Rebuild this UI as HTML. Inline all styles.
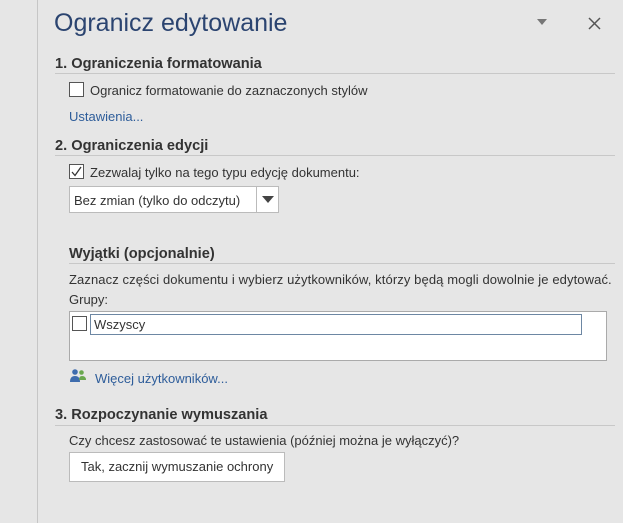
<!DOCTYPE html>
<html><head><meta charset="utf-8"><style>
*{margin:0;padding:0;box-sizing:border-box}
body{width:623px;height:523px;background:#e6e6e6;font-family:"Liberation Sans",sans-serif;position:relative;overflow:hidden;color:#262626}
.a{position:absolute;white-space:nowrap}
.h{font-weight:bold;font-size:14.6px;color:#333}
.t{font-size:13px;color:#333}
.ln{position:absolute;height:1px;background:#c8c8c8}
.cb{position:absolute;width:15px;height:15px;border:1px solid #555;background:#fff}
.lk{color:#2e5d9a;font-size:13px}
</style></head><body>
<div style="position:absolute;left:37px;top:0;width:1px;height:523px;background:#c6c6c6"></div>
<div class="a" style="left:54px;top:9px;font-size:25px;color:#2b4470">Ogranicz edytowanie</div>
<div class="a" style="left:537px;top:19px;width:0;height:0;border-left:5px solid transparent;border-right:5px solid transparent;border-top:6px solid #777"></div>
<svg class="a" style="left:588px;top:17px" width="13" height="13"><path d="M1 1L12 12M12 1L1 12" stroke="#555" stroke-width="1.5"/></svg>

<div class="a h" style="left:55px;top:56px">1. Ograniczenia formatowania</div>
<div class="ln" style="left:55px;top:73px;width:560px"></div>
<div class="cb" style="left:69px;top:82px"></div>
<div class="a t" style="left:90px;top:83px">Ogranicz formatowanie do zaznaczonych stylów</div>
<div class="a lk" style="left:69px;top:109px">Ustawienia...</div>

<div class="a h" style="left:55px;top:138px">2. Ograniczenia edycji</div>
<div class="ln" style="left:55px;top:155px;width:560px"></div>
<div class="cb" style="left:69px;top:164px"></div>
<svg class="a" style="left:70px;top:165px" width="13" height="13"><path d="M2 7L5 10.5L11 2" stroke="#333" stroke-width="1.3" fill="none"/></svg>
<div class="a t" style="left:90px;top:165px">Zezwalaj tylko na tego typu edycję dokumentu:</div>
<div style="position:absolute;left:69px;top:186px;width:210px;height:27px;background:#fff;border:1px solid #bbb"></div>
<div style="position:absolute;left:256px;top:187px;width:1px;height:25px;background:#bbb"></div>
<div class="a t" style="left:74px;top:193px">Bez zmian (tylko do odczytu)</div>
<div class="a" style="left:262px;top:196px;width:0;height:0;border-left:6px solid transparent;border-right:6px solid transparent;border-top:7px solid #444"></div>

<div class="a h" style="left:69px;top:246px">Wyjątki (opcjonalnie)</div>
<div class="ln" style="left:69px;top:263px;width:546px"></div>
<div class="a t" style="left:69px;top:272px;letter-spacing:0.1px">Zaznacz części dokumentu i wybierz użytkowników, którzy będą mogli dowolnie je edytować.</div>
<div class="a t" style="left:69px;top:292px">Grupy:</div>
<div style="position:absolute;left:69px;top:311px;width:538px;height:50px;background:#fff;border:1px solid #aaa"></div>
<div class="cb" style="left:72px;top:316px"></div>
<div style="position:absolute;left:90px;top:314px;width:492px;height:21px;border:1px solid #6d87a3;background:#fff"></div>
<div class="a t" style="left:94px;top:317px">Wszyscy</div>
<svg class="a" style="left:70px;top:368px" width="16" height="16"><circle cx="5" cy="4" r="2.8" fill="#3e6cad"/><path d="M0 14Q0 8 5 8Q10 8 10 14Z" fill="#3e6cad"/><circle cx="11.5" cy="4.5" r="2.3" fill="#6aa84f"/><path d="M9 12Q9 8 12 8Q16 8 16 12Z" fill="#6aa84f"/></svg>
<div class="a lk" style="left:95px;top:371px">Więcej użytkowników...</div>

<div class="a h" style="left:55px;top:407px">3. Rozpoczynanie wymuszania</div>
<div class="ln" style="left:55px;top:425px;width:560px"></div>
<div class="a t" style="left:69px;top:433px">Czy chcesz zastosować te ustawienia (później można je wyłączyć)?</div>
<div style="position:absolute;left:69px;top:452px;width:216px;height:30px;background:#fff;border:1px solid #bbb"></div>
<div class="a t" style="left:81px;top:459px">Tak, zacznij wymuszanie ochrony</div>
</body></html>
